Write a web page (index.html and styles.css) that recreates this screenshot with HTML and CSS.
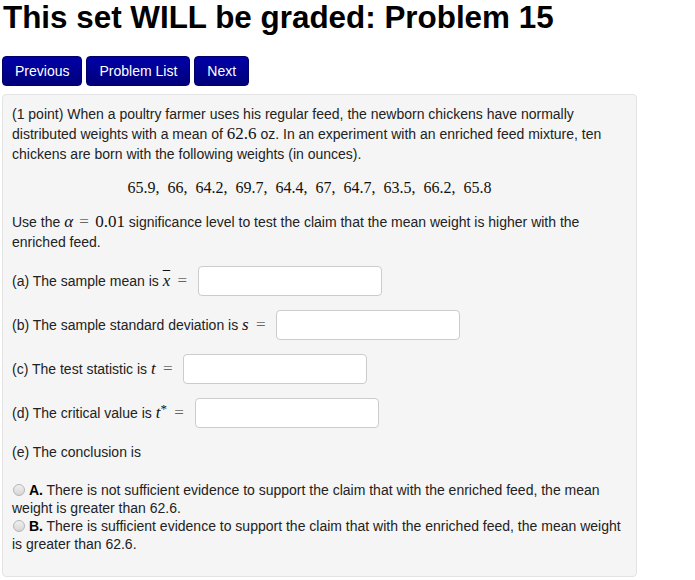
FILE: index.html
```html
<!DOCTYPE html>
<html lang="en">
<head>
  <meta charset="UTF-8" />
  <title>Problem 15</title>
  <link rel="stylesheet" href="styles.css">
</head>
<body>

<div class="page">
  <h1 class="set-title">This set WILL be graded: Problem 15</h1>

  <!-- navegação -->
  <div class="nav">
    <button class="nav-btn">Previous</button>
    <button class="nav-btn">Problem List</button>
    <button class="nav-btn">Next</button>
  </div>

  <div class="problem">
    <p class="intro">(1 point) When a poultry farmer uses his regular feed, the newborn chickens have normally
      distributed weights with a mean of <span class="math">62.6</span> oz. In an experiment with an enriched feed mixture, ten
      chickens are born with the following weights (in ounces).</p>

    <div class="display-math">65.9,&nbsp; 66,&nbsp; 64.2,&nbsp; 69.7,&nbsp; 64.4,&nbsp; 67,&nbsp; 64.7,&nbsp; 63.5,&nbsp; 66.2,&nbsp; 65.8</div>

    <p class="intro">Use the <span class="math"><i>α</i> <span class="eq">=</span> 0.01</span> significance level to test the claim that the mean weight is higher with the
      enriched feed.</p>

    <p class="question">(a) The sample mean is <span class="math"><i class="bar">x</i> <span class="eq">=</span></span> <input type="text" class="answer"></p>
    <p class="question">(b) The sample standard deviation is <span class="math"><i>s</i> <span class="eq">=</span></span> <input type="text" class="answer"></p>
    <p class="question">(c) The test statistic is <span class="math"><i>t</i> <span class="eq">=</span></span> <input type="text" class="answer"></p>
    <p class="question">(d) The critical value is <span class="math"><i>t</i><sup>*</sup> <span class="eq">=</span></span> <input type="text" class="answer"></p>
    <p class="question plain">(e) The conclusion is</p>

    <div class="choices">
      <label class="choice"><input type="radio" name="concl"> <b>A.</b> There is not sufficient evidence to support the claim that with the enriched feed, the mean weight is greater than 62.6.</label>
      <label class="choice"><input type="radio" name="concl"> <b>B.</b> There is sufficient evidence to support the claim that with the enriched feed, the mean weight is greater than 62.6.</label>
    </div>
  </div>
</div>

</body>
</html>
```

FILE: styles.css
```css
* {
  margin: 0;
  padding: 0;
  box-sizing: border-box;
}

body {
  background: #fff;
  font-family: 'Liberation Sans', Arial, sans-serif;
  font-size: 14px;
  color: #222;
}

.page {
  padding: 0 2px;
  width: 639px;
}

.set-title {
  font-size: 31.4px;
  line-height: 36px;
  font-weight: bold;
  color: #000;
  padding-left: 1px;
}

.nav {
  display: flex;
  gap: 4px;
  margin-top: 20px;
}

.nav-btn {
  height: 30px;
  padding: 0 12px;
  font-family: 'Liberation Sans', Arial, sans-serif;
  font-size: 14px;
  color: #fff;
  background: linear-gradient(#0000a8, #00007a);
  border: 1px solid #000066;
  border-radius: 4px;
  cursor: pointer;
}

.problem {
  margin-top: 8px;
  background: #f5f5f5;
  border: 1px solid #e3e3e3;
  border-radius: 4px;
  padding: 9px 9px 23px 9px;
  min-height: 483px;
}

.intro {
  line-height: 20px;
}

.math {
  font-family: 'Liberation Serif', 'Times New Roman', serif;
  font-size: 17px;
  color: #111;
}

.math i {
  font-style: italic;
}

.bar {
  text-decoration: overline;
}

.math sup {
  font-size: 13px;
  vertical-align: 5px;
  line-height: 0;
}

.eq {
  color: #666;
  margin: 0 2px;
}

.display-math {
  font-family: 'Liberation Serif', 'Times New Roman', serif;
  font-size: 16px;
  text-align: center;
  line-height: 28px;
  margin: 10px 0;
  padding-right: 20px;
  color: #111;
}

.question {
  height: 30px;
  line-height: 30px;
  margin-top: 14px;
}

.question .eq {
  margin: 0 3px;
}

.question.plain {
  height: 20px;
  line-height: 20px;
}

.answer {
  width: 184px;
  height: 30px;
  background: #fff;
  border: 1px solid #ccc;
  border-radius: 4px;
  vertical-align: top;
  margin-left: 4px;
}

.choices {
  margin-top: 19px;
}

.choice {
  display: block;
  line-height: 18px;
}

.choice input {
  appearance: none;
  width: 12px;
  height: 12px;
  border: 1px solid #b5b5b5;
  border-radius: 50%;
  background: linear-gradient(#f0f0f0, #d6d6d6);
  vertical-align: -1px;
  margin-left: 1px;
}

.choice b {
  color: #000;
}
```
